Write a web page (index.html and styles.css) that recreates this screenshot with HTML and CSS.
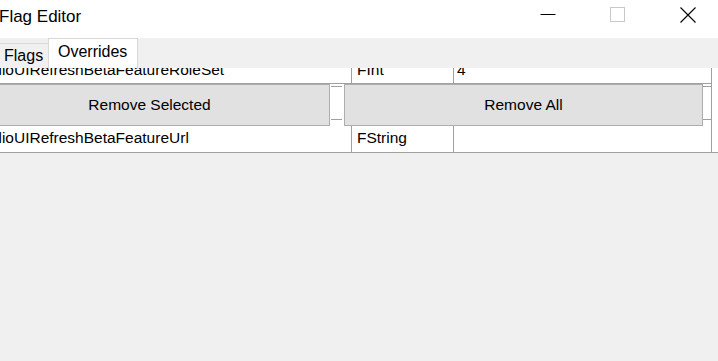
FILE: index.html
```html
<!DOCTYPE html>
<html lang="en">
<head>
    <meta charset="UTF-8">
    <title>Flag Editor</title>
    <link rel="stylesheet" href="styles.css">
</head>
<body>
    <header class="titlebar">
        <span class="title">Flag Editor</span>
        <div class="controls">
            <span class="ctl">
                <svg width="16" height="16" viewBox="0 0 16 16"><path d="M0.5 7.5H15.5" stroke="#000" stroke-width="1"/></svg>
            </span>
            <span class="ctl">
                <svg width="16" height="16" viewBox="0 0 16 16"><rect x="0.5" y="0.5" width="14" height="14" fill="none" stroke="#c8c8c8" stroke-width="1"/></svg>
            </span>
            <span class="ctl">
                <svg width="16" height="16" viewBox="0 0 16 16"><path d="M0.5 0.5L15.5 15.5M15.5 0.5L0.5 15.5" stroke="#000" stroke-width="1.1"/></svg>
            </span>
        </div>
    </header>

    <div class="tabs">
        <div class="tab">Flags</div>
        <div class="tab active">Overrides</div>
    </div>

    <div class="grid">
        <div class="rows">
            <div class="row clipped">
                <div class="cell name"><span>StudioUIRefreshBetaFeatureRoleSet</span></div>
                <div class="cell type">FInt</div>
                <div class="cell value">4</div>
            </div>
            <div class="btn-row">
                <button class="btn wide">Remove Selected</button>
                <div class="gap"><i class="tick"></i><i class="tick"></i></div>
                <button class="btn all">Remove All</button>
                <div class="gap end"><i class="tick"></i><i class="tick"></i></div>
            </div>
            <div class="row">
                <div class="cell name"><span>StudioUIRefreshBetaFeatureUrl</span></div>
                <div class="cell type">FString</div>
                <div class="cell value"></div>
            </div>
        </div>
    </div>
</body>
</html>
```

FILE: styles.css
```css
body {
    margin: 0;
    background: #f0f0f0;
    font-family: "Liberation Sans", Arial, sans-serif;
    font-size: 15.5px;
    color: #000;
    overflow: hidden;
}

.titlebar {
    background: #fff;
    height: 30px;
    padding-bottom: 8px;
    display: flex;
    align-items: center;
}

.title {
    font-size: 17px;
    padding-top: 4px;
    margin-left: -1px;
}

.controls {
    margin-left: auto;
    margin-right: -5px;
    display: flex;
}

.ctl {
    width: 70px;
    height: 30px;
    display: flex;
    align-items: center;
    justify-content: center;
}

.ctl svg {
    display: block;
}

/* tab strip */
.tabs {
    height: 30px;
    display: flex;
    align-items: flex-end;
    font-size: 16px;
}

.tab {
    box-sizing: border-box;
    height: 25px;
    width: 49px;
    padding: 3px 0 0 4px;
    border: 1px solid #d9d9d9;
    border-bottom: none;
    border-left: none;
    background: #f0f0f0;
}

.tab.active {
    height: 30px;
    width: 90px;
    padding: 4px 0 0 9px;
    background: #fff;
    border-left: 1px solid #d9d9d9;
    margin-left: -1px;
}

/* data grid */
.grid {
    background: #fff;
    border-bottom: 1px solid #a0a0a0;
}

.rows {
    width: 711px;
    border-right: 1px solid #a0a0a0;
}

.row {
    display: flex;
    height: 26px;
    overflow: hidden;
}

.row.clipped {
    height: 15px;
    border-bottom: 1px solid #a0a0a0;
}

.cell {
    box-sizing: border-box;
    height: 26px;
    line-height: 24px;
    padding-left: 4px;
    white-space: nowrap;
    overflow: hidden;
}

.row.clipped .cell {
    margin-top: -10px;
}

.cell.name {
    width: 352px;
    border-right: 1px solid #a0a0a0;
    padding-left: 0;
}

/* grid is scrolled sideways, the start of the names is hidden */
.cell.name span {
    display: inline-block;
    margin-left: -30px;
}

.cell.type {
    width: 102px;
    border-right: 1px solid #a0a0a0;
    padding-left: 5px;
}

.cell.value {
    flex: 1;
    padding-left: 3px;
}

.btn-row {
    display: flex;
    height: 42px;
}

.btn {
    box-sizing: border-box;
    flex: none;
    height: 42px;
    margin: 0;
    padding: 0;
    border: 1px solid #adadad;
    background: #e1e1e1;
    font-family: inherit;
    font-size: 15.5px;
    color: #000;
}

.btn.wide {
    width: 361px;
    margin-left: -31px;
}

.btn.all {
    width: 359px;
}

.gap {
    box-sizing: border-box;
    flex: none;
    width: 14px;
    padding: 2px 2px 6px 1px;
    display: flex;
    flex-direction: column;
    justify-content: space-between;
}

.gap.end {
    width: 8px;
    padding: 2px 0 6px 0;
}

.tick {
    display: block;
    height: 1px;
    background: #a0a0a0;
}
```
